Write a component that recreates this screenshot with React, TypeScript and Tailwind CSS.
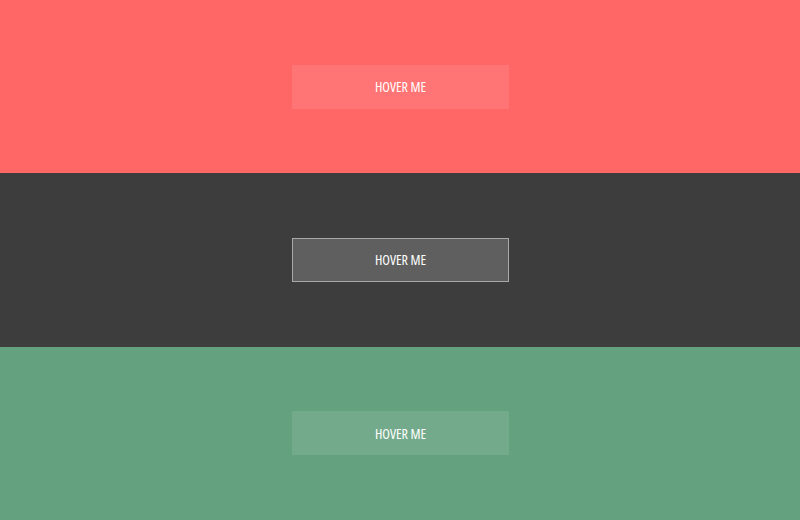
const sections = [
  { bg: 'bg-[#ff6666]', btn: 'bg-white/10 border border-transparent' },
  { bg: 'bg-[#3d3d3d]', btn: 'bg-[#5f5f5f] border border-[#a8a8a8]' },
  { bg: 'bg-[#64a17f]', btn: 'bg-white/10 border border-transparent' },
]

export default function App() {
  return (
    <div className="flex h-[520px] w-full flex-col">
      {sections.map((s, i) => (
        <section key={i} className={`flex flex-1 items-center justify-center ${s.bg}`}>
          <button
            className={`ml-[1px] h-[44px] w-[217px] text-[14px] text-white uppercase ${s.btn}`}
            style={{ fontFamily: '"Open Sans", sans-serif', fontStretch: '75%' }}
          >
            Hover me
          </button>
        </section>
      ))}
    </div>
  )
}
